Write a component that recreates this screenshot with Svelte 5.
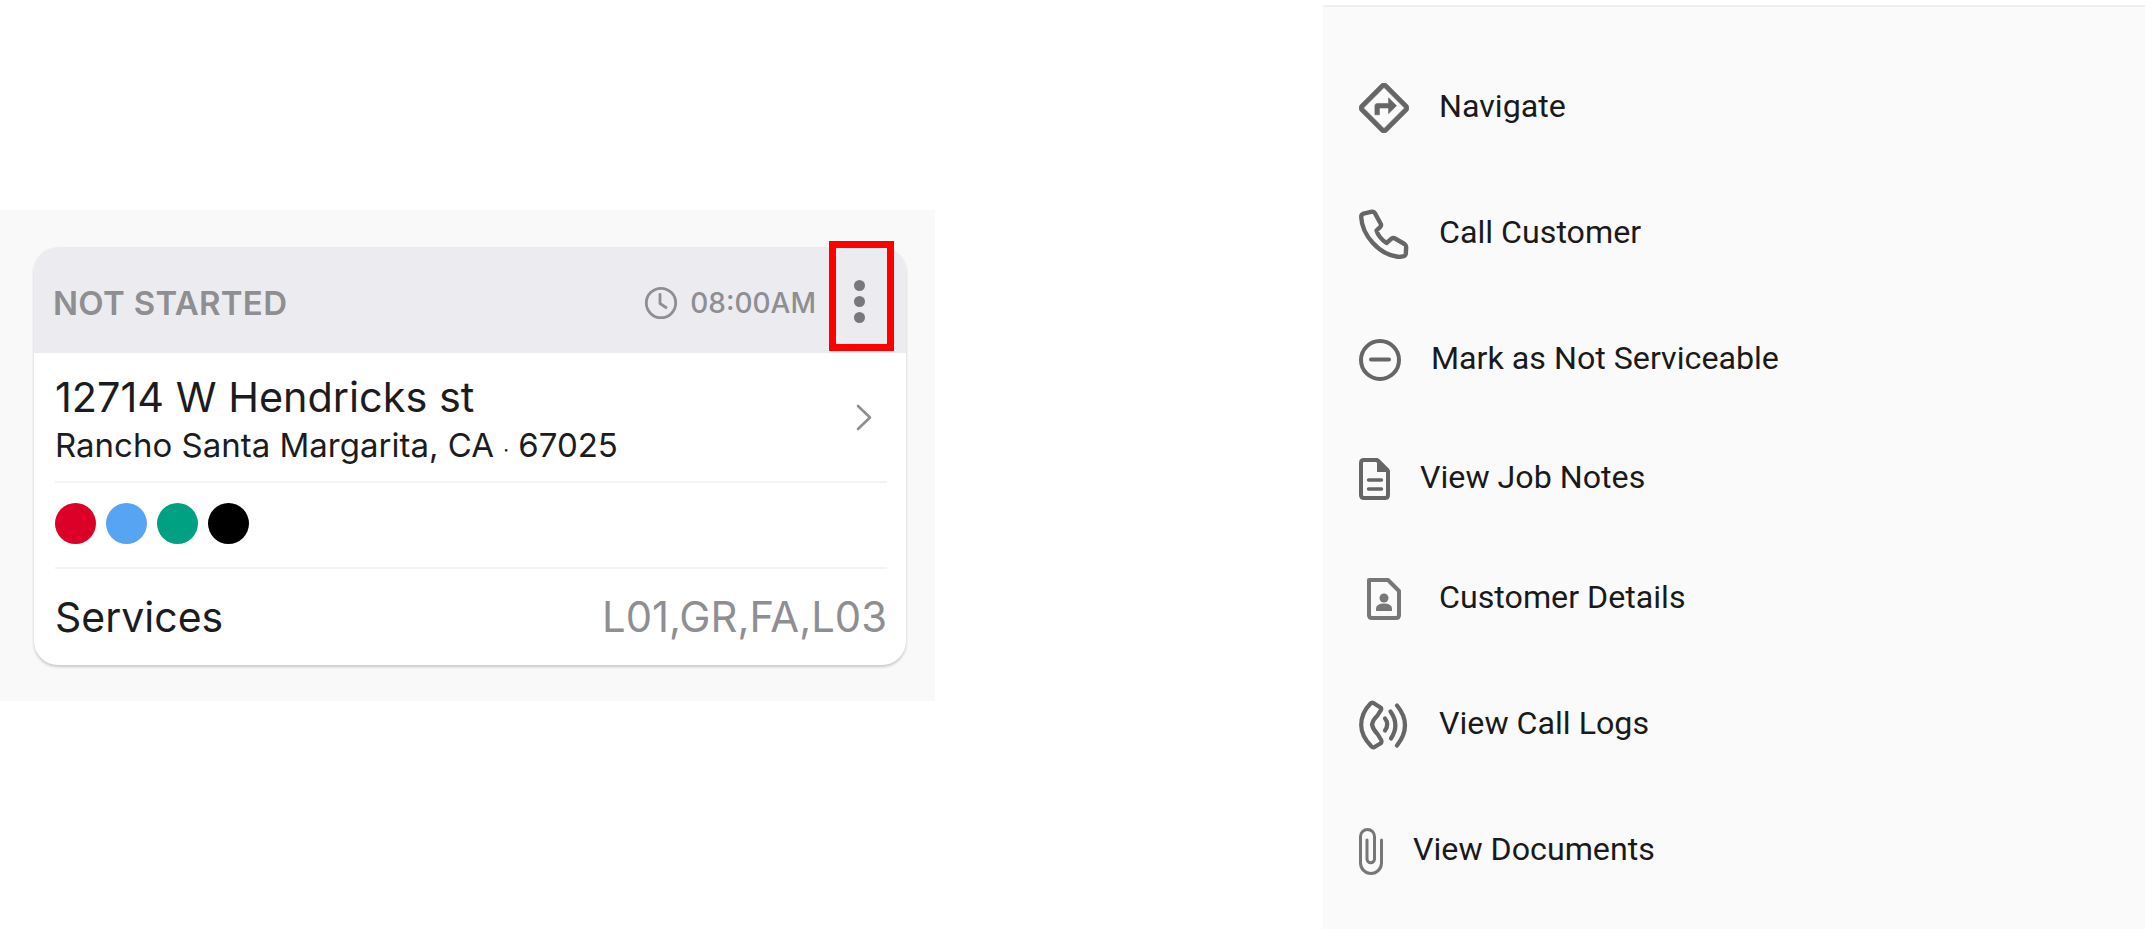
<script lang="ts">
  type Action = { id: string; label: string; width: number; height: number; rowHeight: number };

  const swatches = ['#dc0028', '#57a5f2', '#00a082', '#000000'];

  const actions: Action[] = [
    { id: 'navigate', label: 'Navigate', width: 50, height: 50, rowHeight: 126 },
    { id: 'call', label: 'Call Customer', width: 50, height: 50, rowHeight: 126 },
    { id: 'block', label: 'Mark as Not Serviceable', width: 42, height: 42, rowHeight: 126 },
    { id: 'notes', label: 'View Job Notes', width: 31, height: 42, rowHeight: 112 },
    { id: 'customer', label: 'Customer Details', width: 50, height: 42, rowHeight: 128 },
    { id: 'logs', label: 'View Call Logs', width: 50, height: 50, rowHeight: 124 },
    { id: 'docs', label: 'View Documents', width: 24, height: 47, rowHeight: 128 }
  ];
</script>

<div class="page">
  <section class="stage">
    <article class="card">
      <header class="card-head">
        <span class="status">NOT STARTED</span>
        <span class="time">
          <svg width="34" height="34" viewBox="0 0 34 34" fill="none" stroke="#8e8e93" stroke-width="2.8" stroke-linecap="round" stroke-linejoin="round">
            <circle cx="17" cy="17" r="14.7" />
            <path d="M16 8.5V17.5L22 21.5" />
          </svg>
          08:00AM
        </span>
        <span class="kebab"><i></i><i></i><i></i></span>
        <span class="highlight"></span>
      </header>

      <div class="address">
        <div>
          <div class="street">12714 W Hendricks st</div>
          <div class="city">Rancho Santa Margarita, CA <small>·</small> 67025</div>
        </div>
        <svg class="chevron" width="16" height="27" viewBox="0 0 16 27" fill="none" stroke="#8e8e93" stroke-width="2.6" stroke-linecap="round" stroke-linejoin="round">
          <path d="M2 2L14 13.5L2 25" />
        </svg>
      </div>

      <div class="swatches">
        {#each swatches as color}
          <span class="swatch" style={`background:${color}`}></span>
        {/each}
      </div>

      <div class="services">
        <span>Services</span>
        <span class="codes">L01,GR,FA,L03</span>
      </div>
    </article>
  </section>

  <aside class="sheet">
    {#each actions as action (action.id)}
      <div class="action" style={`height:${action.rowHeight}px`}>
        {#if action.id === 'navigate'}
          <svg width={action.width} height={action.height} viewBox="1 1 22 22" fill="#666">
            <path d="M22.43 10.59l-9.01-9.01c-.75-.75-2.07-.76-2.83 0l-9 9c-.78.78-.78 2.04 0 2.82l9 9c.39.39.9.58 1.41.58.51 0 1.02-.19 1.41-.58l8.99-8.99c.79-.76.8-2.02.03-2.82zm-10.42 10.4l-9-9 9-9 9 9-9 9zM8 11v4h2v-3h4v2.5l3.5-3.5L14 7.5V10H9c-.55 0-1 .45-1 1z" stroke="#666" stroke-width="0.25" />
          </svg>
        {:else if action.id === 'call'}
          <svg width={action.width} height={action.height} viewBox="0 0 50 50" fill="none" stroke="#666" stroke-width="4.4" stroke-linejoin="round">
            <path d="M4.5 4.6L13 2.7Q15 2.4 16 4.3L21.8 15Q22.5 16.5 21.3 17.8L17.5 21.5Q19.5 28.5 27.5 34L32.5 29.7Q34.3 28.5 36 29.5L45.5 35Q47.3 36.2 47.2 38L46.8 44.5Q46.5 47 44 47.4L40 48C20 46 3 26 2.2 8Q2.2 5.5 4.5 4.6Z" />
          </svg>
        {:else if action.id === 'block'}
          <svg width={action.width} height={action.height} viewBox="0 0 42 42" fill="none" stroke="#666" stroke-width="4" stroke-linecap="round">
            <circle cx="21" cy="21" r="19" />
            <path d="M12 20.5H30" />
          </svg>
        {:else if action.id === 'notes'}
          <svg width={action.width} height={action.height} viewBox="0 0 31 42" fill="none" stroke="#666" stroke-width="4" stroke-linejoin="round" stroke-linecap="round">
            <path d="M5 2H18L29 13V37Q29 40 26 40H5Q2 40 2 37V5Q2 2 5 2Z" />
            <path d="M18 1H20L30 11V14H18Z" fill="#666" stroke="none" />
            <path d="M9.5 22H22.5M9.5 31H22.5" stroke-width="3.4" />
          </svg>
        {:else if action.id === 'customer'}
          <svg width={action.width} height={action.height} viewBox="0 0 50 42" fill="none" stroke="#777" stroke-width="4" stroke-linejoin="round">
            <path d="M10 2H29L40 13V37Q40 40 37 40H13Q10 40 10 37Z" />
            <circle cx="25" cy="20" r="4.5" fill="#777" stroke="none" />
            <path d="M17 33V31Q17 25.5 25 25.5Q33 25.5 33 31V33Z" fill="#777" stroke="none" />
          </svg>
        {:else if action.id === 'logs'}
          <svg width={action.width} height={action.height} viewBox="0 0 50 50" fill="none" stroke="#666" stroke-width="4.2" stroke-linecap="round" stroke-linejoin="round">
            <path d="M14 2.8L21.5 7.5Q22.8 8.5 21.8 10.2L18.5 15.5Q14 19.5 13 24.5Q14 29.5 18.5 34L22.2 40Q23 42 21.8 43.2L15.5 47Q13.8 47.8 12.5 46.5Q2.2 36 2.2 25Q2.2 13 11.5 3.5Q12.8 2.2 14 2.8Z" />
            <path d="M26 18.5Q30.5 24 26 30.5" />
            <path d="M31.5 11.5Q41 25 32 38.5" />
            <path d="M38 5.5Q54 25 38 45.5" />
          </svg>
        {:else}
          <svg width={action.width} height={action.height} viewBox="0 0 24 47" fill="none" stroke="#777" stroke-width="3" stroke-linecap="round">
            <path d="M22.5 12V35A10.5 10.5 0 0 1 1.5 35V8.5A7 7 0 0 1 15.5 8.5V31A3.7 3.7 0 0 1 8 31V12" />
          </svg>
        {/if}
        <span class="action-label">{action.label}</span>
      </div>
    {/each}
  </aside>
</div>

<style>
  :global(body) {
    background: #fff;
  }

  .page {
    display: flex;
    justify-content: space-between;
    align-items: flex-start;
    height: 929px;
    overflow: hidden;
    background: #fff;
    font-family: Inter, 'Liberation Sans', sans-serif;
  }

  .stage {
    box-sizing: border-box;
    width: 935px;
    height: 491px;
    margin-top: 210px;
    padding: 37px 29px 0 34px;
    background: #f9f9f9;
  }

  .card {
    height: 418px;
    border-radius: 24px;
    background: #fff;
    box-shadow: 0 2px 3px rgba(0, 0, 0, 0.2);
  }

  .card-head {
    position: relative;
    display: flex;
    align-items: center;
    height: 106px;
    padding: 0 0 0 19px;
    border-radius: 24px 24px 0 0;
    background: #ecebf0;
    color: #8e8e93;
  }

  .status {
    flex: 1;
    padding-top: 6px;
    font-size: 33px;
    font-weight: 600;
    letter-spacing: 0.3px;
  }

  .time {
    display: flex;
    align-items: center;
    gap: 12px;
    padding-top: 6px;
    font-size: 28px;
    font-weight: 500;
  }

  .kebab {
    display: flex;
    flex-direction: column;
    gap: 5px;
    width: 11px;
    margin: 3px 41px 0 38px;
  }

  .kebab i {
    width: 11px;
    height: 11px;
    border-radius: 50%;
    background: #77777c;
  }

  .highlight {
    position: absolute;
    top: -6px;
    right: 12px;
    box-sizing: border-box;
    width: 65px;
    height: 110px;
    border: 7px solid #f00;
  }

  .address {
    display: flex;
    align-items: center;
    justify-content: space-between;
    height: 130px;
    margin: 0 19px 0 21px;
    border-bottom: 2px solid #f3f3f4;
    box-sizing: border-box;
    color: #1c1c1e;
  }

  .address > div {
    padding-top: 8px;
  }

  .street {
    font-size: 41.4px;
    line-height: 52px;
  }

  .city {
    font-size: 33px;
    line-height: 44px;
  }

  .city small {
    font-size: 20px;
  }

  .chevron {
    margin-right: 15px;
  }

  .swatches {
    display: flex;
    align-items: center;
    gap: 10px;
    height: 86px;
    padding-bottom: 3px;
    margin: 0 19px 0 21px;
    border-bottom: 2px solid #f3f3f4;
    box-sizing: border-box;
  }

  .swatch {
    width: 41px;
    height: 41px;
    border-radius: 50%;
  }

  .services {
    display: flex;
    align-items: center;
    justify-content: space-between;
    height: 96px;
    margin: 0 19px 0 21px;
    font-size: 41px;
    color: #1c1c1e;
  }

  .codes {
    font-size: 41.8px;
    color: #8e8e93;
  }

  .sheet {
    box-sizing: border-box;
    width: 822px;
    height: 924px;
    margin-top: 5px;
    padding: 38px 0 0 36px;
    border-top: 2px solid #eee;
    background: #fafafa;
    font-family: Roboto, 'Liberation Sans', sans-serif;
  }

  .action {
    display: flex;
    align-items: center;
    gap: 30px;
  }

  .action-label {
    margin-bottom: 4px;
    font-size: 32.2px;
    font-weight: 450;
    color: #1a1a1a;
  }
</style>
